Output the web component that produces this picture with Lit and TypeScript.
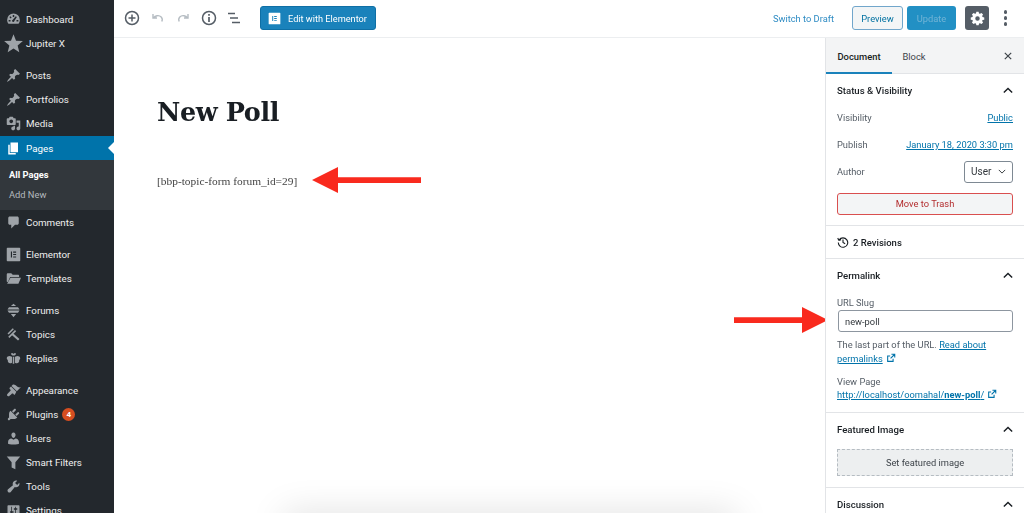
import { LitElement, html, css, svg } from "lit";
import { customElement } from "lit/decorators.js";

const ICONS: Record<string, any> = {
  dashboard: svg`<path fill-rule="evenodd" d="M10 2a8.500 8.500 0 0 0-8.500 8.500c0 2 .7 3.800 1.800 5.200h13.400a8.400 8.400 0 0 0 1.800-5.200A8.500 8.500 0 0 0 10 2zM9 4h2v2.500H9zM4.500 6.500l1.500-1 1.500 2-1.500 1zM3.500 10.500h2.500v2H3.500zM14 10.500h2.500v2H14zM13 5.500l1.500 1-3.200 5.200a1.600 1.600 0 1 1-2.200-1.500z"/>`,
  star: svg`<path transform="translate(-2.500 -2.800) scale(1.250)" d="M10 .5l2.700 6.700 7.300.5-5.600 4.700 1.800 7.100L10 15.600l-6.200 3.900 1.800-7.100L0 7.700l7.300-.5z"/>`,
  pin: svg`<path d="M10.440 3.020l1.820-1.820 6.360 6.350-1.830 1.820c-1.050-.68-2.480-.57-3.410.36l-.75.750c-.92.930-1.040 2.350-.35 3.410l-1.830 1.820-2.410-2.410-2.800 2.790c-.42.420-3.380 2.710-3.800 2.290s1.860-3.390 2.280-3.810l2.790-2.790L4.100 9.360l1.830-1.820c1.050.69 2.480.57 3.400-.36l.75-.75c.93-.92 1.050-2.350.36-3.410z"/>`,
  media: svg`<path d="M13 11V4c0-.55-.45-1-1-1h-1.670L9 1H5L3.670 3H2c-.55 0-1 .45-1 1v7c0 .55.45 1 1 1h10c.55 0 1-.45 1-1zM7 4.500c1.380 0 2.500 1.120 2.500 2.500S8.380 9.500 7 9.500 4.500 8.380 4.500 7 5.620 4.500 7 4.500zM14 6h5v10.500c0 1.380-1.120 2.500-2.500 2.500S14 17.880 14 16.500s1.120-2.500 2.500-2.500c.17 0 .34.02.5.05V9h-3V6zm-4 8.050V13h2v3.500c0 1.380-1.120 2.500-2.500 2.500S7 17.880 7 16.500 8.120 14 9.500 14c.17 0 .34.02.5.05z"/>`,
  pages: svg`<path d="M6 15V2h10v13H6zm-1 1h8v2H3V5h2v11z"/>`,
  comments: svg`<path d="M5 2h10c1.100 0 2 .9 2 2v7c0 1.100-.9 2-2 2h-3l-5 5v-5H5c-1.100 0-2-.9-2-2V4c0-1.100.9-2 2-2z"/>`,
  elementor: svg`<path fill-rule="evenodd" d="M2 1h16a1 1 0 0 1 1 1v16a1 1 0 0 1-1 1H2a1 1 0 0 1-1-1V2a1 1 0 0 1 1-1zm4.500 5v8H8V6zm3 0v1.500h4V6zm0 3.200v1.500h4V9.200zm0 3.300V14h4v-1.500z"/>`,
  templates: svg`<path d="M1 4.500C1 3.700 1.700 3 2.500 3H7l2 2h7c.8 0 1.500.7 1.500 1.500V8H5.500L2.500 14.500H2L1 14zM6 9h14l-3.500 8H1.500z"/>`,
  forums: svg`<path d="M10 1l3.500 3h-7zM4 5.500h12l2 3H2zM2 10h16l-2 3H4zM6.500 14.500h7L10 19z"/>`,
  topics: svg`<path d="M9 1.500l1.500 1.500-7 7L2 8.500zM12 4l1.500 1.500-9 9L3 13zM7 10l2-2 9 8-2 2z"/>`,
  replies: svg`<path d="M6.500 4a2 2 0 0 1 3-.6l.5.600.5-.600a2 2 0 0 1 3 .6l-2 2h-3zM1 9.500C1 7.500 3 6.500 5 6.500l3 1v8c-2 1.500-4 1-5-.5-1-1.200-.5-3-.5-3C1.800 11.500 1 10.500 1 9.500zM19 9.500c0-2-2-3-4-3l-3 1v8c2 1.500 4 1 5-.5 1-1.200.5-3 .5-3 .7-.5 1.500-1.500 1.500-2.500zM9 7.500h2V17H9z"/>`,
  brush: svg`<path d="M14.480 11.060L7.410 3.990l1.500-1.500c.5-.56 2.300-.47 3.510.32 1.210.8 1.430 1.280 2.910 2.100 1.180.64 2.450 1.260 4.450.85zm-.71.71L6.700 4.700 4.930 6.470c-.39.39-.39 1.020 0 1.410l1.060 1.060c.39.39.39 1.030 0 1.420-.6.6-2.400 2.400-3.500 3.500-.9.900-1.400 2-1 2.700.4.700 1.700 1.500 2.700 1 1-.5 2.800-2.400 3.800-3.400.39-.39 1.030-.39 1.420 0l1.060 1.060c.39.39 1.020.39 1.410 0z"/>`,
  plugins: svg`<path d="M13.110 4.360L9.870 7.600 8 5.730l3.240-3.240c.35-.34 1.050-.2 1.560.32.52.51.66 1.210.31 1.550zm-8 1.770l.91-1.120 9.010 9.010-1.190.84c-.71.71-2.630 1.160-3.820 1.160H6.140L4.900 17.260c-.59.59-1.540.59-2.120 0-.59-.58-.59-1.530 0-2.120l1.240-1.240v-3.880c0-1.130.4-3.190 1.090-3.890zm7.260 3.970l3.240-3.240c.34-.35 1.040-.21 1.550.31.52.51.66 1.210.31 1.550l-3.240 3.250z"/>`,
  users: svg`<path d="M10 9.250c-2.270 0-2.730-3.440-2.730-3.440C7 4.020 7.820 2 9.970 2c2.160 0 2.980 2.020 2.710 3.810 0 0-.41 3.440-2.680 3.440zm0 2.570L12.720 10c2.390 0 4.520 2.330 4.520 4.530v2.490s-3.650 1.130-7.240 1.130c-3.650 0-7.240-1.130-7.240-1.130v-2.490c0-2.250 1.940-4.480 4.470-4.480z"/>`,
  filter: svg`<path d="M1 2h18l-6.500 7.500V19l-5-2.500v-7z"/>`,
  tools: svg`<path d="M16.680 9.770c-1.340 1.340-3.300 1.670-4.950.99l-5.410 6.520c-.99.99-2.590.99-3.580 0s-.99-2.590 0-3.570l6.520-5.420c-.68-1.650-.35-3.610.99-4.950 1.280-1.280 3.120-1.620 4.720-1.060l-2.890 2.890 2.820 2.820 2.860-2.870c.53 1.580.18 3.390-1.080 4.650z"/>`,
  settings: svg`<path fill-rule="evenodd" d="M3 3h14a1 1 0 0 1 1 1v12a1 1 0 0 1-1 1H3a1 1 0 0 1-1-1V4a1 1 0 0 1 1-1zm4 2v6H5.500v2H7v2h1v-2h2v-2H8V5zm5 0v2h-1.500v2H12v6h1V9h2V7h-2V5z"/>`,
};

type Item = { label: string; icon: string; badge?: string; current?: boolean };
const GROUPS: Item[][] = [
  [{ label: "Dashboard", icon: "dashboard" }, { label: "Jupiter X", icon: "star" }],
  [
    { label: "Posts", icon: "pin" },
    { label: "Portfolios", icon: "pin" },
    { label: "Media", icon: "media" },
    { label: "Pages", icon: "pages", current: true },
    { label: "Comments", icon: "comments" },
  ],
  [{ label: "Elementor", icon: "elementor" }, { label: "Templates", icon: "templates" }],
  [{ label: "Forums", icon: "forums" }, { label: "Topics", icon: "topics" }, { label: "Replies", icon: "replies" }],
  [
    { label: "Appearance", icon: "brush" },
    { label: "Plugins", icon: "plugins", badge: "4" },
    { label: "Users", icon: "users" },
    { label: "Smart Filters", icon: "filter" },
    { label: "Tools", icon: "tools" },
    { label: "Settings", icon: "settings" },
  ],
];

const chevronUp = svg`<svg class="chev" viewBox="0 0 12 8" width="10" height="7"><path d="M1 6.500l5-5 5 5" fill="none" stroke="#191e23" stroke-width="1.700"/></svg>`;
const ext = svg`<svg class="ext" viewBox="0 0 12 12" width="10" height="10"><path d="M8.500 7v3H2V3.500h3M6.500 1.500h4v4M10.500 1.500L5.500 6.500" fill="none" stroke="#0073aa" stroke-width="1.300"/></svg>`;

@customElement("app-root")
export class AppRoot extends LitElement {
  static styles = css`
    :host { display: block; width: 1024px; height: 513px; overflow: hidden; position: relative; background: #fff;
      font-family: Roboto, "Liberation Sans", sans-serif; font-size: 9.300px; color: #191e23; }
    * { box-sizing: border-box; }
    .app { display: grid; grid-template-columns: 114px 1fr; height: 513px; filter: blur(0.3px); }

    .side { background: #23282d; padding-top: 7px; height: 513px; overflow: hidden; }
    .group { margin-bottom: 8px; }
    .item { position: relative; display: flex; align-items: center; height: 24px; padding-left: 6px; color: #eee; font-size: 9.800px; }
    .item svg { width: 15px; height: 15px; fill: #9ea3a8; flex: none; overflow: visible; }
    .item .lab { margin-left: 5px; }
    .item.current { background: #0073aa; color: #fff; margin-top: 1px; }
    .item.current svg { fill: #fff; }
    .item.current::after { content: ""; position: absolute; right: 0; top: 6px; border: 6px solid transparent; border-right-color: #fff; border-left: 0; }
    .badge { display: inline-flex; align-items: center; justify-content: center; width: 13px; height: 13px; margin-left: 4px; border-radius: 50%; background: #d54e21; color: #fff; font-size: 8px; font-weight: 700; }
    .sub { background: #32373c; height: 50px; padding: 5px 0 0 9px; font-size: 9.300px; color: #b4b9be; display: flex; flex-direction: column; }
    .sub div { height: 20px; line-height: 20px; }
    .sub .on { color: #fff; font-weight: 700; }

    .right { display: flex; flex-direction: column; min-width: 0; height: 513px; }
    .top { height: 38px; flex: none; border-bottom: 1px solid #eceef0; display: flex; align-items: center; padding: 0 0 1px 9px; }
    .tool { width: 18px; height: 18px; margin-right: 7.500px; flex: none; }
    .elbtn { margin-left: 9.500px; width: 116px; height: 24px; background: #1a82bb; border-radius: 3px; border: 1px solid #0f6fa5; color: #fff; display: flex; align-items: center; padding-left: 7px; gap: 7px; font-size: 9.200px; }
    .elbtn svg { width: 13px; height: 13px; fill: #fff; flex: none; }
    .spacer { flex: 1; }
    .draft { color: #2f8cc4; margin-right: 18px; }
    .preview { width: 51px; height: 24px; border: 1px solid #71a6cb; border-radius: 3px; background: #f3f5f6; color: #0071a1; display: flex; align-items: center; justify-content: center; }
    .update { width: 49px; height: 24px; margin-left: 4px; border-radius: 3px; background: #2290c4; color: #72b4d6; display: flex; align-items: center; justify-content: center; }
    .gear { width: 24px; height: 24px; margin-left: 9px; border-radius: 3px; background: #555d66; display: flex; align-items: center; justify-content: center; }
    .gear svg { width: 15px; height: 15px; fill: #fff; }
    .dots { width: 4px; margin: 0 16.500px 0 14.500px; display: flex; flex-direction: column; gap: 2.500px; }
    .dots i { width: 3.500px; height: 3.500px; border-radius: 50%; background: #555d66; display: block; }

    .body { flex: 1; display: grid; grid-template-columns: 1fr 199px; min-height: 0; }
    .canvas { padding: 56px 0 0 43px; position: relative; overflow: hidden; }
    h1 { margin: 0; font-family: "DejaVu Serif", serif; font-weight: 700; font-size: 25.500px; line-height: 36px; color: #191e23; letter-spacing: -0.400px; }
    .para { margin-top: 43px; font-family: "Liberation Serif", serif; font-size: 11.400px; color: #444; line-height: 16px; }
    .shadow { position: absolute; left: 170px; bottom: -30px; height: 30px; width: 452px; box-shadow: 0 0 36px rgba(0,0,0,.13); }
    .arrow { position: absolute; }
    .a1 { left: 198px; top: 129px; }
    .a2 { left: 620px; top: 269px; }

    .panel { border-left: 1px solid #e2e4e7; overflow: hidden; position: relative; }
    .tabs { height: 36px; background: #f3f4f5; display: flex; align-items: stretch; border-bottom: 1px solid #e2e4e7; }
    .tab { width: 66px; display: flex; align-items: center; justify-content: center; font-size: 9.400px; padding-top: 2px; }
    .tab.on { border-bottom: 2px solid #1a82bb; height: 36px; font-weight: 500; }
    .tab.b { width: 44px; color: #3d4349; }
    .x { margin-left: auto; width: 32px; display: flex; align-items: center; justify-content: center; padding-top: 1px; }
    .sec { border-bottom: 1px solid #e2e4e7; padding: 0 11px; }
    .sec.status { padding-bottom: 10.500px; }
    .head { display: flex; align-items: center; justify-content: space-between; height: 30px; padding-top: 2px; font-weight: 500; font-size: 9.600px; }
    .row { display: flex; align-items: center; justify-content: space-between; color: #555d66; height: 27px; }
    .row a, .link { color: #0073aa; text-decoration: underline; }
    .sel { width: 49px; height: 22px; border: 1px solid #7e8993; border-radius: 3px; display: flex; align-items: center; justify-content: space-between; padding: 0 6px; color: #32373c; font-size: 10px; }
    .trash { margin-top: 7.500px; height: 22px; border: 1px solid #d94f4f; border-radius: 3px; background: #f3f5f6; color: #b32d2e; display: flex; align-items: center; justify-content: center; }
    .rev { display: flex; align-items: center; gap: 4px; height: 33px; font-weight: 500; font-size: 9.500px; border-bottom: 1px solid #e2e4e7; padding: 0 11px; }
    .lab2 { color: #555d66; line-height: 12px; margin-top: 8px; }
    .slug { height: 22px; margin-top: 1px; border: 1px solid #8d96a0; border-radius: 3px; padding: 0 6px; display: flex; align-items: center; color: #32373c; margin-left: 1px; }
    .help { color: #555d66; line-height: 13.500px; margin-top: 6px; }
    .ext { vertical-align: -1px; margin-left: 3px; }
    .view { color: #555d66; margin-top: 9.500px; line-height: 13.500px; padding-bottom: 10.500px; }
    .featured { height: 27px; margin: 6px 0 11px; border: 1px dashed #b5bcc2; background: #edeff0; display: flex; align-items: center; justify-content: center; color: #3d4349; }
  `;

  private tool(inner: unknown) {
    return html`<svg class="tool" viewBox="0 0 18 18" fill="none">${inner}</svg>`;
  }

  render() {
    return html`
      <div class="app">
        <nav class="side">
          ${GROUPS.map(
            (g) => html`<div class="group">
              ${g.map(
                (it) => html`<div class="item ${it.current ? "current" : ""}">
                    <svg viewBox="0 0 20 20">${ICONS[it.icon]}</svg>
                    <span class="lab">${it.label}</span>
                    ${it.badge ? html`<span class="badge">${it.badge}</span>` : ""}
                  </div>
                  ${it.current ? html`<div class="sub"><div class="on">All Pages</div><div>Add New</div></div>` : ""}`
              )}
            </div>`
          )}
        </nav>
        <div class="right">
          <header class="top">
            ${this.tool(svg`<circle cx="9" cy="9" r="6.500" stroke="#555d66" stroke-width="1.500"/><path d="M9 5.500v7M5.500 9h7" stroke="#555d66" stroke-width="1.500"/>`)}
            ${this.tool(svg`<path d="M4 5v4h4M4.500 9C6 6.500 10 5.800 12.200 8c1.300 1.300 1.300 3 .6 4.500" stroke="#b5bcc2" stroke-width="1.400"/>`)}
            ${this.tool(svg`<path d="M14 5v4h-4M13.500 9C12 6.500 8 5.800 5.800 8c-1.300 1.300-1.300 3-.6 4.500" stroke="#b5bcc2" stroke-width="1.400"/>`)}
            ${this.tool(svg`<circle cx="9" cy="9" r="6.500" stroke="#555d66" stroke-width="1.500"/><path d="M9 8v5M9 5v1.700" stroke="#555d66" stroke-width="1.700"/>`)}
            ${this.tool(svg`<path d="M3 4.500h7M5 9h8M7 13.500h8" stroke="#555d66" stroke-width="1.500"/>`)}
            <div class="elbtn"><svg viewBox="0 0 20 20">${ICONS.elementor}</svg><span>Edit with Elementor</span></div>
            <div class="spacer"></div>
            <span class="draft">Switch to Draft</span>
            <div class="preview">Preview</div>
            <div class="update">Update</div>
            <div class="gear">
              <svg viewBox="0 0 20 20"><path fill-rule="evenodd" d="M18 11.500v-3l-2.300-.6-.5-1.200 1.200-2.100-2.100-2-2 1.200-1.300-.5L10.500 1h-3l-.6 2.300-1.200.5-2-1.200-2.100 2.100 1.200 2-.5 1.300L0 8.500v3l2.300.6.5 1.200-1.200 2.100 2.100 2 2-1.200 1.300.5.500 2.300h3l.6-2.300 1.200-.5 2.100 1.200 2-2.100-1.200-2 .5-1.300zM9 13a3 3 0 1 1 0-6 3 3 0 0 1 0 6z" transform="translate(1)"/></svg>
            </div>
            <div class="dots"><i></i><i></i><i></i></div>
          </header>
          <div class="body">
            <main class="canvas">
              <h1>New Poll</h1>
              <div class="para">[bbp-topic-form forum_id=29]</div>
              <div class="shadow"></div>
              <svg class="arrow a1" width="109" height="26" viewBox="0 0 109 26"><path d="M0 13L26 0v10.300h83v5.600H26V26z" fill="#f92a1e"/></svg>
              <svg class="arrow a2" width="94" height="26" viewBox="0 0 94 26"><path d="M94 13L68 0v10.300H0v5.600h68V26z" fill="#f92a1e"/></svg>
            </main>
            <aside class="panel">
              <div class="tabs">
                <div class="tab on">Document</div>
                <div class="tab b">Block</div>
                <div class="x"><svg viewBox="0 0 10 10" width="8" height="8"><path d="M1 1l8 8M9 1L1 9" stroke="#3d4349" stroke-width="1.500"/></svg></div>
              </div>
              <section class="sec status">
                <div class="head"><span>Status &amp; Visibility</span>${chevronUp}</div>
                <div class="row"><span>Visibility</span><a>Public</a></div>
                <div class="row"><span>Publish</span><a>January 18, 2020 3:30 pm</a></div>
                <div class="row">
                  <span>Author</span>
                  <div class="sel"><span>User</span><svg viewBox="0 0 10 6" width="8" height="5"><path d="M1 1l4 4 4-4" fill="none" stroke="#32373c" stroke-width="1.200"/></svg></div>
                </div>
                <div class="trash">Move to Trash</div>
              </section>
              <div class="rev">
                <svg viewBox="0 0 14 14" width="12" height="12"><path d="M2.500 4.500A5.500 5.500 0 1 1 1.500 7.500M.8 2.500l1.500 2.500 2.500-.8M7 4v3.500l2.500 1.500" fill="none" stroke="#191e23" stroke-width="1.300"/></svg>
                <span>2 Revisions</span>
              </div>
              <section class="sec">
                <div class="head"><span>Permalink</span>${chevronUp}</div>
                <div class="lab2">URL Slug</div>
                <div class="slug">new-poll</div>
                <div class="help">The last part of the URL. <span class="link">Read about permalinks</span>${ext}</div>
                <div class="view">View Page<br /><span class="link">http://localhost/oomahal/<b>new-poll</b>/</span>${ext}</div>
              </section>
              <section class="sec">
                <div class="head"><span>Featured Image</span>${chevronUp}</div>
                <div class="featured">Set featured image</div>
              </section>
              <section class="sec">
                <div class="head"><span>Discussion</span>${chevronUp}</div>
              </section>
            </aside>
          </div>
        </div>
      </div>
    `;
  }
}
